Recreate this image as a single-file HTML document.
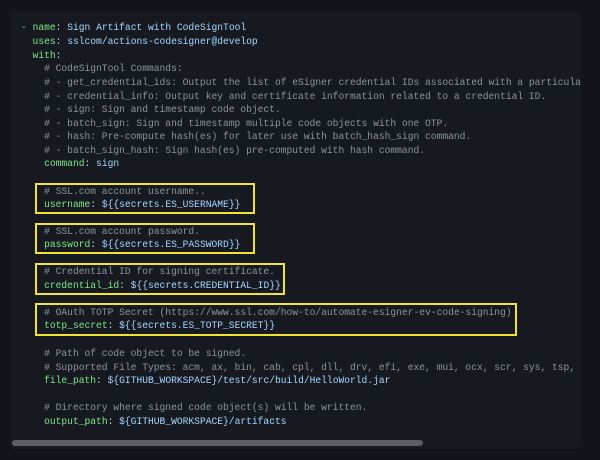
<html><head><style>
body{margin:0;width:600px;height:460px;background:#121419;overflow:hidden;position:relative;font-family:"Liberation Mono",monospace}
.p{position:absolute;left:10px;top:11px;width:571px;height:438px;background:#161a20;border-radius:4px;overflow:hidden}
.l{position:absolute;left:0;white-space:pre;font-size:10.5px;line-height:13px;color:#c9d1d9;transform:scaleX(0.916);transform-origin:0 0}
.k{color:#7ee787}.v{color:#a5d6ff}.c{color:#8b949e}.d{color:#79c0ff}
.b{position:absolute;border:2.5px solid #f2e232;box-sizing:border-box}
.sb{position:absolute;left:2px;top:429px;width:411px;height:6px;border-radius:3px;background:#5a5d62}
</style></head><body><div class="p">
<div class="l" style="top:11px;left:11px"><span class="d">-</span> <span class="k">name</span>: <span class="v">Sign Artifact with CodeSignTool</span></div>
<div class="l" style="top:25px;left:11px">  <span class="k">uses</span>: <span class="v">sslcom/actions-codesigner@develop</span></div>
<div class="l" style="top:39px;left:11px">  <span class="k">with</span>:</div>
<div class="l c" style="top:52px;left:11px">    # CodeSignTool Commands:</div>
<div class="l c" style="top:66px;left:11px">    # - get_credential_ids: Output the list of eSigner credential IDs associated with a particular</div>
<div class="l c" style="top:80px;left:11px">    # - credential_info: Output key and certificate information related to a credential ID.</div>
<div class="l c" style="top:93px;left:11px">    # - sign: Sign and timestamp code object.</div>
<div class="l c" style="top:107px;left:11px">    # - batch_sign: Sign and timestamp multiple code objects with one OTP.</div>
<div class="l c" style="top:120px;left:11px">    # - hash: Pre-compute hash(es) for later use with batch_hash_sign command.</div>
<div class="l c" style="top:134px;left:11px">    # - batch_sign_hash: Sign hash(es) pre-computed with hash command.</div>
<div class="l" style="top:147px;left:11px">    <span class="k">command</span>: <span class="v">sign</span></div>
<div class="b" style="left:25px;top:172px;width:220px;height:31px"></div>
<div class="l c" style="top:175px;left:11px">    # SSL.com account username..</div>
<div class="l" style="top:188px;left:11px">    <span class="k">username</span>: <span class="v">${{secrets.ES_USERNAME}}</span></div>
<div class="b" style="left:25px;top:212px;width:220px;height:31px"></div>
<div class="l c" style="top:215px;left:11px">    # SSL.com account password.</div>
<div class="l" style="top:228px;left:11px">    <span class="k">password</span>: <span class="v">${{secrets.ES_PASSWORD}}</span></div>
<div class="b" style="left:25px;top:252px;width:250px;height:32px"></div>
<div class="l c" style="top:255px;left:11px">    # Credential ID for signing certificate.</div>
<div class="l" style="top:269px;left:11px">    <span class="k">credential_id</span>: <span class="v">${{secrets.CREDENTIAL_ID}}</span></div>
<div class="b" style="left:25px;top:292px;width:482px;height:33px"></div>
<div class="l c" style="top:296px;left:11px">    # OAuth TOTP Secret (https://www.ssl.com/how-to/automate-esigner-ev-code-signing)</div>
<div class="l" style="top:309px;left:11px">    <span class="k">totp_secret</span>: <span class="v">${{secrets.ES_TOTP_SECRET}}</span></div>
<div class="l c" style="top:337px;left:11px">    # Path of code object to be signed.</div>
<div class="l c" style="top:351px;left:11px">    # Supported File Types: acm, ax, bin, cab, cpl, dll, drv, efi, exe, mui, ocx, scr, sys, tsp,</div>
<div class="l" style="top:364px;left:11px">    <span class="k">file_path</span>: <span class="v">${GITHUB_WORKSPACE}/test/src/build/HelloWorld.jar</span></div>
<div class="l c" style="top:391px;left:11px">    # Directory where signed code object(s) will be written.</div>
<div class="l" style="top:405px;left:11px">    <span class="k">output_path</span>: <span class="v">${GITHUB_WORKSPACE}/artifacts</span></div>
<div class="sb"></div>
</div></body></html>
